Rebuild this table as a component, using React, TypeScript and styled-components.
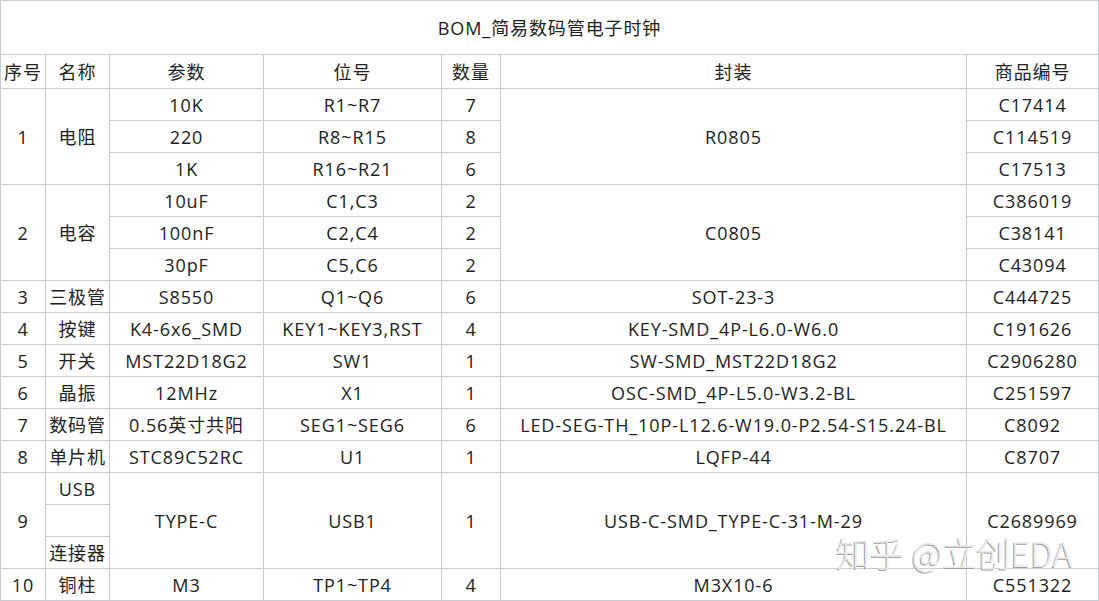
import React from 'react';
import styled, { createGlobalStyle } from 'styled-components';

type Item = {
  no: string;
  name: string[];
  params: string[];
  refs: string[];
  qty: string[];
  pkg: string;
  codes: string[];
};

const items: Item[] = [
  { no: '1', name: ['电阻'], params: ['10K', '220', '1K'], refs: ['R1~R7', 'R8~R15', 'R16~R21'], qty: ['7', '8', '6'], pkg: 'R0805', codes: ['C17414', 'C114519', 'C17513'] },
  { no: '2', name: ['电容'], params: ['10uF', '100nF', '30pF'], refs: ['C1,C3', 'C2,C4', 'C5,C6'], qty: ['2', '2', '2'], pkg: 'C0805', codes: ['C386019', 'C38141', 'C43094'] },
  { no: '3', name: ['三极管'], params: ['S8550'], refs: ['Q1~Q6'], qty: ['6'], pkg: 'SOT-23-3', codes: ['C444725'] },
  { no: '4', name: ['按键'], params: ['K4-6x6_SMD'], refs: ['KEY1~KEY3,RST'], qty: ['4'], pkg: 'KEY-SMD_4P-L6.0-W6.0', codes: ['C191626'] },
  { no: '5', name: ['开关'], params: ['MST22D18G2'], refs: ['SW1'], qty: ['1'], pkg: 'SW-SMD_MST22D18G2', codes: ['C2906280'] },
  { no: '6', name: ['晶振'], params: ['12MHz'], refs: ['X1'], qty: ['1'], pkg: 'OSC-SMD_4P-L5.0-W3.2-BL', codes: ['C251597'] },
  { no: '7', name: ['数码管'], params: ['0.56英寸共阳'], refs: ['SEG1~SEG6'], qty: ['6'], pkg: 'LED-SEG-TH_10P-L12.6-W19.0-P2.54-S15.24-BL', codes: ['C8092'] },
  { no: '8', name: ['单片机'], params: ['STC89C52RC'], refs: ['U1'], qty: ['1'], pkg: 'LQFP-44', codes: ['C8707'] },
  { no: '9', name: ['USB', '', '连接器'], params: ['TYPE-C'], refs: ['USB1'], qty: ['1'], pkg: 'USB-C-SMD_TYPE-C-31-M-29', codes: ['C2689969'] },
  { no: '10', name: ['铜柱'], params: ['M3'], refs: ['TP1~TP4'], qty: ['4'], pkg: 'M3X10-6', codes: ['C551322'] },
];

const colWidths = [45, 64, 154, 178, 59, 466, 132];
const headers = ['序号', '名称', '参数', '位号', '数量', '封装', '商品编号'];

// a column either has one value per sub-row or a single value spanning all of them
const cellFor = (values: string[], i: number, rows: number) => {
  if (values.length === rows) return <Cell key={i}>{values[i]}</Cell>;
  if (i === 0) return <Cell rowSpan={rows}>{values[0]}</Cell>;
  return null;
};

const App: React.FC = () => {
  return (
    <>
      <GlobalStyle />
      <Page>
        <Table>
          <colgroup>
            {colWidths.map((w, i) => (
              <col key={i} style={{ width: w }} />
            ))}
          </colgroup>
          <thead>
            <TitleRow>
              <Cell colSpan={7}>BOM_简易数码管电子时钟</Cell>
            </TitleRow>
            <HeaderRow>
              {headers.map((h) => (
                <Cell key={h}>{h}</Cell>
              ))}
            </HeaderRow>
          </thead>
          <tbody>
            {items.map((item) => {
              const rows = Math.max(item.name.length, item.params.length, item.codes.length);
              return Array.from({ length: rows }).map((_, i) => (
                <Row key={`${item.no}-${i}`}>
                  {i === 0 && <Cell rowSpan={rows}>{item.no}</Cell>}
                  {cellFor(item.name, i, rows)}
                  {cellFor(item.params, i, rows)}
                  {cellFor(item.refs, i, rows)}
                  {cellFor(item.qty, i, rows)}
                  {i === 0 && <Cell rowSpan={rows}>{item.pkg}</Cell>}
                  {cellFor(item.codes, i, rows)}
                </Row>
              ));
            })}
          </tbody>
        </Table>
        <Watermark>知乎 @立创EDA</Watermark>
      </Page>
    </>
  );
};

export default App;

const GlobalStyle = createGlobalStyle`
  body {
    margin: 0;
    background: #ffffff;
    font-family: "Open Sans", "Noto Sans CJK SC", sans-serif;
    color: #222222;
  }
`;

const Page = styled.div`
  position: relative;
  width: 1099px;
  height: 601px;
  overflow: hidden;
`;

const Table = styled.table`
  border-collapse: collapse;
  table-layout: fixed;
  width: 1098px;
`;

const Cell = styled.td`
  border: 1px solid #c8cbd2;
  padding: 0;
  text-align: center;
  vertical-align: middle;
  font-size: 18px;
  line-height: 20px;
  letter-spacing: 0.9px;
  white-space: nowrap;
  overflow: hidden;
`;

const TitleRow = styled.tr`
  height: 54px;
`;

const HeaderRow = styled.tr`
  height: 34px;
`;

const Row = styled.tr`
  height: 32px;
`;

const Watermark = styled.div`
  position: absolute;
  left: 836px;
  top: 537px;
  font-family: "Noto Sans CJK SC", sans-serif;
  font-size: 34px;
  line-height: 32px;
  font-weight: 300;
  color: #ececec;
  text-shadow: -1px 1px 0 #a0a0a0;
  white-space: nowrap;
  pointer-events: none;
`;
